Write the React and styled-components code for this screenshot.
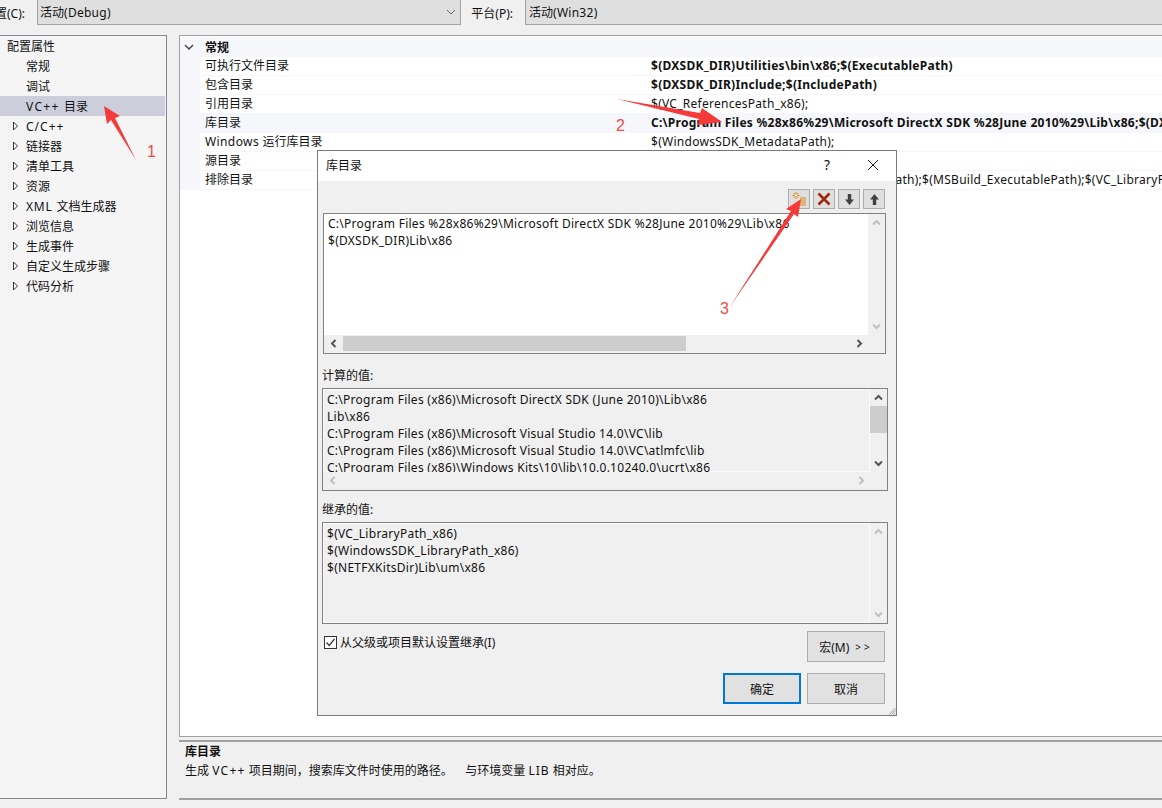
import React from 'react'
import styled, { createGlobalStyle } from 'styled-components'

const GlobalStyle = createGlobalStyle`
    html, body {
        margin: 0;
        padding: 0;
        background: #f0f0f0;
    }
    body {
        font-family: "Noto Sans", "Noto Sans CJK SC", sans-serif;
        font-size: 12px;
        color: #111;
    }
`

const Page = styled.div`
    position: relative;
    width: 1162px;
    height: 808px;
    overflow: hidden;
    background: #f0f0f0;
`

const Latin = styled.span`
    letter-spacing: ${(props) => props.$spacing || 0.27}px;
`

const TopBar = styled.div`
    display: flex;
    align-items: center;
    height: 25px;
    margin-right: -20px;
`

const TopLabel = styled.div`
    display: flex;
    justify-content: flex-end;
    flex: none;
    width: ${(props) => props.$width}px;
    margin-left: ${(props) => props.$left || 0}px;
    margin-right: ${(props) => props.$right}px;
    overflow: hidden;
    white-space: nowrap;
`

const SelectBox = styled.div`
    display: flex;
    align-items: center;
    justify-content: space-between;
    box-sizing: border-box;
    width: ${(props) => props.$width}px;
    height: 26px;
    margin-top: -1px;
    padding: 0 4px 0 ${(props) => props.$pad}px;
    flex: none;
    background: #dfdfdf;
    border: 1px solid #a3a3a3;
`

const Main = styled.div`
    display: flex;
    align-items: flex-start;
    gap: 12px;
    height: 765px;
    margin-top: 10px;
`

const Sidebar = styled.div`
    box-sizing: border-box;
    width: 167px;
    height: 764px;
    flex: none;
    background: #f5f5f5;
    border: 1px solid #828790;
    border-left: none;
`

const TreeRow = styled.div`
    display: flex;
    align-items: center;
    height: 20px;
    padding-left: ${(props) => props.$indent}px;
    margin-right: 1px;
    white-space: pre;
    background: ${(props) => (props.$selected ? '#cccedb' : 'transparent')};
`

const TreeArrow = styled.svg`
    width: 7px;
    height: 10px;
    margin-left: 12px;
    margin-right: 7px;
    flex: none;
`

const Content = styled.div`
    display: flex;
    flex-direction: column;
    gap: 3px;
    flex: 1;
    min-width: 0;
`

const Grid = styled.div`
    box-sizing: border-box;
    height: 702px;
    padding-top: 1px;
    background: #fff;
    border: 1px solid #a0a0a0;
    border-right: none;
    overflow: hidden;
`

const GroupRow = styled.div`
    display: flex;
    align-items: center;
    height: 20px;
    background: #f5f7fb;
    font-weight: 700;
`

const GroupArrow = styled.svg`
    width: 10px;
    height: 7px;
    margin-left: 4px;
    margin-right: 11px;
    flex: none;
`

const PropRow = styled.div`
    display: flex;
    height: 19px;
    background: #f5f7fb;
`

const PropName = styled.div`
    box-sizing: border-box;
    width: 451px;
    flex: none;
    margin-left: 20px;
    padding-left: 5px;
    line-height: 18px;
    white-space: pre;
    background: ${(props) => (props.$active ? '#f5f7fb' : '#fff')};
    border-bottom: 1px solid #f5f7fb;
`

const PropValue = styled.div`
    flex: 1;
    text-indent: ${(props) => props.$indent || 0}px;
    line-height: 18px;
    letter-spacing: 0.27px;
    white-space: nowrap;
    overflow: hidden;
    font-weight: ${(props) => (props.$bold ? 700 : 400)};
    background: ${(props) => (props.$active ? '#f5f7fb' : '#fff')};
    border-bottom: 1px solid #f5f7fb;
`

const Description = styled.div`
    box-sizing: border-box;
    height: 60px;
    padding: 0 6px;
    background: #f0f0f0;
    border-top: 2px solid #a0a0a0;
    border-bottom: 2px solid #a0a0a0;
    line-height: 19px;
    white-space: pre;
`

const DescriptionTitle = styled.div`
    font-weight: 700;
`

const Dialog = styled.div`
    position: absolute;
    left: 317px;
    top: 150px;
    box-sizing: border-box;
    display: flex;
    flex-direction: column;
    width: 580px;
    height: 566px;
    background: #f0f0f0;
    border: 1px solid #7a7a7a;
`

const TitleBar = styled.div`
    display: flex;
    align-items: center;
    flex: none;
    box-sizing: border-box;
    height: 30px;
    padding: 0 0 3px 8px;
    background: #fff;
`

const Title = styled.div`
    flex: 1;
`

const TitleButton = styled.div`
    display: flex;
    align-items: center;
    justify-content: center;
    width: 24px;
    margin-right: ${(props) => props.$right}px;
    font-size: 14px;
`

const Toolbar = styled.div`
    display: flex;
    justify-content: flex-end;
    gap: 3px;
    height: 20px;
    margin: 8px 11px 4px 0;
`

const ToolButton = styled.div`
    display: flex;
    align-items: center;
    justify-content: center;
    box-sizing: border-box;
    width: 22px;
    height: 20px;
    background: #dfdfdf;
    border: 1px solid #adadad;
`

const ListBox = styled.div`
    display: grid;
    grid-template-columns: 1fr 17px;
    grid-template-rows: ${(props) => (props.$noBottom ? '1fr' : '1fr 18px')};
    box-sizing: border-box;
    width: ${(props) => props.$width}px;
    height: ${(props) => props.$height}px;
    margin-left: ${(props) => props.$left}px;
    background: #f0f0f0;
    border: 1px solid #828282;
    flex: none;
`

const ListText = styled.div`
    min-width: 0;
    overflow: hidden;
    padding: ${(props) => props.$top}px 0 0 4px;
    line-height: 17px;
    letter-spacing: 0.27px;
    white-space: nowrap;
    background: ${(props) => (props.$white ? '#fff' : '#f0f0f0')};
    box-shadow: inset 0 0 0 1px ${(props) => (props.$white ? '#fff' : '#fbfbfb')};
`

const ScrollV = styled.div`
    display: flex;
    flex-direction: column;
    align-items: stretch;
    justify-content: space-between;
    min-height: 0;
`

const ScrollH = styled.div`
    display: flex;
    align-items: stretch;
    justify-content: space-between;
    min-width: 0;
`

const ScrollEnd = styled.div`
    display: flex;
    align-items: center;
    justify-content: center;
    flex: none;
    width: ${(props) => (props.$horizontal ? 18 : 17)}px;
    height: 17px;
`

const ThumbTrack = styled.div`
    flex: 1;
    display: flex;
    min-width: 0;
    min-height: 0;
`

const ThumbH = styled.div`
    width: ${(props) => props.$size}px;
    height: 15px;
    margin: 1px 0;
    margin-left: ${(props) => props.$start}px;
    background: #cdcdcd;
`

const ThumbV = styled.div`
    width: 100%;
    height: ${(props) => props.$size}px;
    margin-top: ${(props) => props.$start}px;
    background: #cdcdcd;
`

const FieldLabel = styled.div`
    height: 17px;
    line-height: 17px;
    margin: ${(props) => props.$top}px 0 4px 4px;
    flex: none;
`

const Footer = styled.div`
    display: grid;
    grid-template-columns: 1fr 78px 78px;
    grid-template-rows: 31px 31px;
    column-gap: 6px;
    row-gap: 11px;
    margin: 7px 11px 0 6px;
`

const CheckRow = styled.label`
    grid-column: 1 / 3;
    display: flex;
    align-items: flex-start;
    gap: 3px;
    line-height: 19px;
    padding-top: 2px;
`

const CheckBox = styled.span`
    display: flex;
    align-items: center;
    justify-content: center;
    box-sizing: border-box;
    width: 13px;
    height: 13px;
    margin-top: 3px;
    background: #fff;
    border: 1px solid #333;
    flex: none;
`

const Button = styled.div`
    display: flex;
    align-items: center;
    justify-content: center;
    box-sizing: border-box;
    grid-column: ${(props) => props.$column};
    background: #e1e1e1;
    border: ${(props) => (props.$primary ? '2px solid #0078d7' : '1px solid #adadad')};
`

const Macro = styled.span`
    margin-left: 6px;
    letter-spacing: 3px;
    font-size: 10px;
`

const Grip = styled.svg`
    position: absolute;
    right: 0;
    bottom: 0;
    width: 8px;
    height: 8px;
`

const Annotation = styled.svg`
    position: absolute;
    left: 0;
    top: 0;
    width: 1162px;
    height: 808px;
    pointer-events: none;
`

const StepNumber = styled.div`
    position: absolute;
    left: ${(props) => props.$x}px;
    top: ${(props) => props.$y}px;
    font-family: "Liberation Sans", sans-serif;
    font-size: 16px;
    line-height: 18px;
    color: #f04a45;
`

const treeItems = [
    <Latin $spacing={1}>C/C++</Latin>,
    '链接器',
    '清单工具',
    '资源',
    <><Latin $spacing={0.8}>XML </Latin>文档生成器</>,
    '浏览信息',
    '生成事件',
    '自定义生成步骤',
    '代码分析',
]

const propRows = [
    { name: '可执行文件目录', value: '$(DXSDK_DIR)Utilities\\bin\\x86;$(ExecutablePath)', bold: true },
    { name: '包含目录', value: '$(DXSDK_DIR)Include;$(IncludePath)', bold: true },
    { name: '引用目录', value: '$(VC_ReferencesPath_x86);' },
    { name: '库目录', value: 'C:\\Program Files %28x86%29\\Microsoft DirectX SDK %28June 2010%29\\Lib\\x86;$(DXSDK_DIR)Lib\\x86;$(LibraryPath)', bold: true, active: true },
    { name: <><Latin $spacing={0.4}>Windows </Latin>运行库目录</>, value: '$(WindowsSDK_MetadataPath);' },
    { name: '源目录', value: '$(VC_SourcePath);' },
    { name: '排除目录', value: '$(VC_IncludePath);$(WindowsSDK_IncludePath);$(MSBuild_ExecutablePath);$(VC_LibraryPath_x86);', indent: -10 },
]

const computedLines = [
    'C:\\Program Files (x86)\\Microsoft DirectX SDK (June 2010)\\Lib\\x86',
    'Lib\\x86',
    'C:\\Program Files (x86)\\Microsoft Visual Studio 14.0\\VC\\lib',
    'C:\\Program Files (x86)\\Microsoft Visual Studio 14.0\\VC\\atlmfc\\lib',
    'C:\\Program Files (x86)\\Windows Kits\\10\\lib\\10.0.10240.0\\ucrt\\x86',
]

const inheritedLines = ['$(VC_LibraryPath_x86)', '$(WindowsSDK_LibraryPath_x86)', '$(NETFXKitsDir)Lib\\um\\x86']

// small scrollbar chevron, rotated per direction
const Chevron = ({ dir, off }) => {
    const rotate = { up: 0, right: 90, down: 180, left: 270 }[dir]
    return (
        <svg width="9" height="7" viewBox="0 0 9 7" style={{ transform: `rotate(${rotate}deg)` }}>
            <path d="M1 5.5 L4.5 2 L8 5.5" fill="none" stroke={off ? '#c0c0c0' : '#555'} strokeWidth="2" />
        </svg>
    )
}

const App = () => {
    return (
        <Page>
            <GlobalStyle />
            <TopBar>
                <TopLabel $width={25} $right={12}>配置(C):</TopLabel>
                <SelectBox $width={424} $pad={2}>
                    <span>活动<Latin>(Debug)</Latin></span>
                    <svg width="10" height="6" viewBox="0 0 10 6">
                        <path d="M1 1 L5 5 L9 1" fill="none" stroke="#666" strokeWidth="1" />
                    </svg>
                </SelectBox>
                <TopLabel $width={45} $left={7} $right={12}>平台(P):</TopLabel>
                <SelectBox $width={660} $pad={3}><span>活动<Latin>(Win32)</Latin></span></SelectBox>
            </TopBar>

            <Main>
                <Sidebar>
                    <TreeRow $indent={7}>配置属性</TreeRow>
                    <TreeRow $indent={26}>常规</TreeRow>
                    <TreeRow $indent={26}>调试</TreeRow>
                    <TreeRow $indent={26} $selected><Latin $spacing={1.3}>VC++ </Latin>目录</TreeRow>
                    {treeItems.map((item, i) => (
                        <TreeRow $indent={0} key={i}>
                            <TreeArrow viewBox="0 0 7 10">
                                <path d="M1.5 1 L5.5 5 L1.5 9 Z" fill="#fff" stroke="#333" strokeWidth="1" />
                            </TreeArrow>
                            <span>{item}</span>
                        </TreeRow>
                    ))}
                </Sidebar>

                <Content>
                    <Grid>
                        <GroupRow>
                            <GroupArrow viewBox="0 0 10 7">
                                <path d="M1 1 L5 5 L9 1" fill="none" stroke="#444" strokeWidth="1.5" />
                            </GroupArrow>
                            常规
                        </GroupRow>
                        {propRows.map((row, i) => (
                            <PropRow key={i}>
                                <PropName $active={row.active}>{row.name}</PropName>
                                <PropValue $bold={row.bold} $active={row.active} $indent={row.indent}>{row.value}</PropValue>
                            </PropRow>
                        ))}
                    </Grid>
                    <Description>
                        <DescriptionTitle>库目录</DescriptionTitle>
                        生成 <Latin $spacing={1.3}>VC++</Latin> 项目期间，搜索库文件时使用的路径。{'    '}与环境变量 <Latin $spacing={1}>LIB</Latin> 相对应。
                    </Description>
                </Content>
            </Main>

            <Dialog>
                <TitleBar>
                    <Title>库目录</Title>
                    <TitleButton $right={22}>?</TitleButton>
                    <TitleButton $right={11}>
                        <svg width="12" height="12" viewBox="0 0 12 12">
                            <path d="M1 1 L11 11 M11 1 L1 11" stroke="#222" strokeWidth="1" />
                        </svg>
                    </TitleButton>
                </TitleBar>

                <Toolbar>
                    <ToolButton>
                        <svg width="16" height="15" viewBox="0 0 16 15">
                            <rect x="9" y="5" width="6" height="9" fill="#dcb67a" />
                            <rect x="6" y="7" width="3" height="7" fill="#f3e6cc" />
                            <path d="M5 0 V7 M1.5 3.5 H8.5 M2.5 1 L7.5 6 M7.5 1 L2.5 6" stroke="#d9861a" strokeWidth="1" />
                            <circle cx="5" cy="3.5" r="1.3" fill="#fff3c8" />
                        </svg>
                    </ToolButton>
                    <ToolButton>
                        <svg width="14" height="14" viewBox="0 0 14 14">
                            <path d="M1.5 1.5 L12.5 12.5 M12.5 1.5 L1.5 12.5" stroke="#a1260d" strokeWidth="2.6" />
                        </svg>
                    </ToolButton>
                    <ToolButton>
                        <svg width="11" height="13" viewBox="0 0 11 13">
                            <path d="M5.5 12 L1 6.5 H3.8 V1 H7.2 V6.5 H10 Z" fill="#424242" />
                        </svg>
                    </ToolButton>
                    <ToolButton>
                        <svg width="11" height="13" viewBox="0 0 11 13">
                            <path d="M5.5 1 L1 6.5 H3.8 V12 H7.2 V6.5 H10 Z" fill="#424242" />
                        </svg>
                    </ToolButton>
                </Toolbar>

                <ListBox $width={563} $height={141} $left={5}>
                    <ListText $white $top={1}>
                        <div>C:\Program Files %28x86%29\Microsoft DirectX SDK %28June 2010%29\Lib\x86</div>
                        <div>$(DXSDK_DIR)Lib\x86</div>
                    </ListText>
                    <ScrollV>
                        <ScrollEnd><Chevron dir="up" off /></ScrollEnd>
                        <ScrollEnd><Chevron dir="down" off /></ScrollEnd>
                    </ScrollV>
                    <ScrollH>
                        <ScrollEnd $horizontal><Chevron dir="left" /></ScrollEnd>
                        <ThumbTrack><ThumbH $start={1} $size={343} /></ThumbTrack>
                        <ScrollEnd $horizontal><Chevron dir="right" /></ScrollEnd>
                    </ScrollH>
                </ListBox>

                <FieldLabel $top={13}>计算的值:</FieldLabel>
                <ListBox $width={566} $height={103} $left={4}>
                    <ListText $top={2}>
                        {computedLines.map((line) => <div key={line}>{line}</div>)}
                    </ListText>
                    <ScrollV>
                        <ScrollEnd><Chevron dir="up" /></ScrollEnd>
                        <ThumbTrack><ThumbV $start={0} $size={27} /></ThumbTrack>
                        <ScrollEnd><Chevron dir="down" /></ScrollEnd>
                    </ScrollV>
                    <ScrollH>
                        <ScrollEnd $horizontal><Chevron dir="left" off /></ScrollEnd>
                        <ScrollEnd $horizontal><Chevron dir="right" off /></ScrollEnd>
                    </ScrollH>
                </ListBox>

                <FieldLabel $top={10}>继承的值:</FieldLabel>
                <ListBox $width={566} $height={102} $left={4} $noBottom>
                    <ListText $top={2}>
                        {inheritedLines.map((line) => <div key={line}>{line}</div>)}
                    </ListText>
                    <ScrollV>
                        <ScrollEnd><Chevron dir="up" off /></ScrollEnd>
                        <ScrollEnd><Chevron dir="down" off /></ScrollEnd>
                    </ScrollV>
                </ListBox>

                <Footer>
                    <CheckRow>
                        <CheckBox>
                            <svg width="11" height="11" viewBox="0 0 11 11">
                                <path d="M1.5 5.5 L4.2 8.5 L9.5 2" fill="none" stroke="#333" strokeWidth="1.2" />
                            </svg>
                        </CheckBox>
                        从父级或项目默认设置继承(I)
                    </CheckRow>
                    <Button $column="3">宏(M)<Macro>&gt;&gt;</Macro></Button>
                    <Button $column="2" $primary>确定</Button>
                    <Button $column="3">取消</Button>
                </Footer>

                <Grip viewBox="0 0 8 8">
                    <path d="M7.5 1 L1 7.5 M7.5 3.5 L3.5 7.5 M7.5 6 L6 7.5" stroke="#999" strokeWidth="1" />
                </Grip>
            </Dialog>

            <Annotation viewBox="0 0 1162 808">
                <path d="M104 106 L120 116 L115 118 L136 160 L111 120 L107 124 Z" fill="#f63a3a" />
                <path d="M617 99 L700 113 L702 108 L722 122 L698 125 L699 119 Z" fill="#f63a3a" />
                <path d="M729 308 L791 211 L786 209 L801 199 L798 217 L794 214 Z" fill="#f63a3a" />
            </Annotation>
            <StepNumber $x={147} $y={143}>1</StepNumber>
            <StepNumber $x={616} $y={117}>2</StepNumber>
            <StepNumber $x={720} $y={300}>3</StepNumber>
        </Page>
    )
}

export default App
